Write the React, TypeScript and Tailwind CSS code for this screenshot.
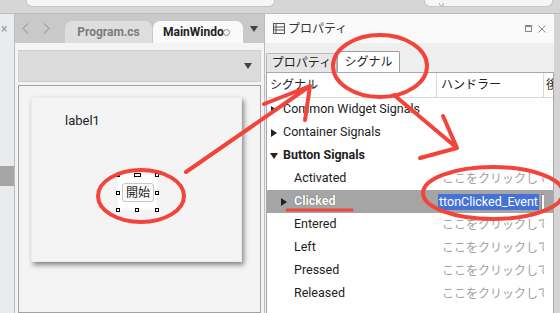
import React from 'react';

const ui = "font-['Roboto','Noto_Sans_CJK_JP',sans-serif]";

function TriRight({ className = '' }: { className?: string }) {
    return (
        <svg width="6" height="8" viewBox="0 0 6 8" className={className}>
            <path d="M0 0L6 4L0 8Z" fill="currentColor" />
        </svg>
    );
}

function TriDown({ className = '' }: { className?: string }) {
    return (
        <svg width="8" height="6" viewBox="0 0 8 6" className={className}>
            <path d="M0 0L8 0L4 6Z" fill="currentColor" />
        </svg>
    );
}

type Row = {
    label: string;
    level: 0 | 1;
    expander?: 'right' | 'down';
    bold?: boolean;
    selected?: boolean;
    handler?: string;
};

const placeholder = 'ここをクリックしてハンドラーを追加';

const rows: Row[] = [
    { label: 'Common Widget Signals', level: 0, expander: 'right' },
    { label: 'Container Signals', level: 0, expander: 'right' },
    { label: 'Button Signals', level: 0, expander: 'down', bold: true },
    { label: 'Activated', level: 1, handler: placeholder },
    { label: 'Clicked', level: 1, expander: 'right', selected: true },
    { label: 'Entered', level: 1, handler: placeholder },
    { label: 'Left', level: 1, handler: placeholder },
    { label: 'Pressed', level: 1, handler: placeholder },
    { label: 'Released', level: 1, handler: placeholder },
];

function SignalRow({ row }: { row: Row }) {
    return (
        <div
            className={`flex h-[23px] items-center ${row.selected ? 'bg-[#a5a5a5]' : ''}`}
        >
            <div className="flex w-[170px] shrink-0 items-center">
                {row.level === 0 ? (
                    <div className="flex items-center pl-[4px] text-[#222]">
                        {row.expander === 'down' ? (
                            <TriDown className="-ml-[1px]" />
                        ) : (
                            <TriRight />
                        )}
                        <span
                            className={`text-[12.5px] ${row.bold ? 'font-bold' : ''} ${row.expander === 'down' ? 'ml-[5px]' : 'ml-[6px]'}`}
                        >
                            {row.label}
                        </span>
                    </div>
                ) : (
                    <div className="flex items-center pl-[14px]">
                        {row.expander ? (
                            <TriRight className="text-[#222]" />
                        ) : (
                            <span className="w-[6px]" />
                        )}
                        <span
                            className={`ml-[7px] text-[12.5px] ${row.selected ? 'font-bold text-white [text-shadow:0_0_1px_rgba(0,0,0,0.6)]' : 'text-[#222]'}`}
                        >
                            {row.label}
                        </span>
                    </div>
                )}
            </div>
            <div className="flex w-[107px] shrink-0 items-center overflow-hidden whitespace-nowrap">
                {row.selected ? (
                    <>
                        <span className="ml-[1px] bg-[#4472d6] px-[1px] text-[12.5px] leading-[16px] text-white">
                            ttonClicked_Event
                        </span>
                        <span className="ml-[2px] h-[16px] w-[4px] shrink-0 border border-[#888] bg-white" />
                    </>
                ) : (
                    <span className="pl-[5px] text-[12px] text-[#a0a0a0]">
                        {row.handler}
                    </span>
                )}
            </div>
        </div>
    );
}

export default function App() {
    return (
        <div
            className={`relative flex h-[313px] w-[560px] flex-col overflow-hidden bg-[#d6d6d6] ${ui}`}
        >
            {/* window top strip */}
            <div className="flex h-[14px] shrink-0 items-start border-b border-[#bdbdbd] pl-[26px]">
                <div className="h-[7px] w-[249px] rounded-b-[6px] border-x border-b border-[#c6c6c6] bg-[#f6f6f6]" />
                <div className="ml-[149px] flex h-[7px] w-[129px] items-end rounded-b-[6px] border-x border-b border-[#c6c6c6] bg-[#f6f6f6] pl-[14px]">
                    <span className="h-[3px] w-[5px] rounded-b-full border-x border-b border-[#bbb]" />
                </div>
            </div>

            <div className="flex flex-1">
                {/* left dock strip */}
                <div className="flex w-[14px] shrink-0 flex-col bg-[#e9ebef]">
                    <div className="flex h-[29px] items-center pl-[1px] text-[12px] leading-none text-[#9a9a9a]">
                        ×
                    </div>
                    <div className="mt-[123px] h-[20px] bg-[#a6a6a6]" />
                </div>

                {/* editor */}
                <div className="flex w-[251px] shrink-0 flex-col border-x border-[#bcbcbc] bg-[#f4f4f4]">
                    <div className="flex h-[29px] shrink-0 items-end bg-[#c9c9c9]">
                        <div className="flex h-full items-center gap-[14px] pl-[7px] text-[#8a8a8a]">
                            <svg width="7" height="11" viewBox="0 0 7 11">
                                <path d="M6 0.5L1 5.5L6 10.5" fill="none" stroke="currentColor" strokeWidth="1" />
                            </svg>
                            <svg width="7" height="11" viewBox="0 0 7 11">
                                <path d="M1 0.5L6 5.5L1 10.5" fill="none" stroke="currentColor" strokeWidth="1" />
                            </svg>
                        </div>
                        <div className="ml-[15px] flex h-[22px] w-[87px] items-center justify-center rounded-t-[7px] bg-[#dedede] text-[12px] font-bold text-[#7b7b7b]">
                            Program.cs
                        </div>
                        <div className="ml-[1px] flex h-[22px] w-[90px] items-center rounded-t-[7px] bg-[#fafafa] pl-[10px] text-[12px] font-bold text-[#222]">
                            <span>MainWindo</span>
                            <span className="-ml-[1px] h-[7px] w-[7px] rounded-full border border-[#8a8a8a]" />
                        </div>
                        <div className="flex h-full flex-1 items-center justify-center text-[#444]">
                            <TriDown />
                        </div>
                    </div>

                    <div className="mx-[3px] mt-[7px] flex h-[32px] shrink-0 items-center justify-end border border-[#cfcfcf] bg-[#dbdbdb] pr-[8px] text-[#444]">
                        <TriDown />
                    </div>

                    <div className="mx-[3px] mt-[3px] flex-1 border border-[#a2a2a2] bg-[#f4f4f4] pl-[12px] pt-[11px]">
                        <div className="flex h-[165px] w-[211px] flex-col border border-[#ececec] bg-[#f4f4f4] shadow-[2px_3px_5px_rgba(0,0,0,0.45)]">
                            <div className="pl-[33px] pt-[15px] text-[13px] leading-[16px] text-[#222]">
                                label1
                            </div>
                            <div className="relative ml-[86px] mt-[46px] h-[35px] w-[39px] bg-white">
                                <div className="ml-[4px] mt-[8px] flex h-[19px] w-[32px] items-center justify-center rounded-[3px] border border-[#c8c8c8] bg-[#fbfbfb] text-[12px] text-[#222]">
                                    開始
                                </div>
                                <span className="absolute -left-[2px] -top-[2px] h-[4px] w-[4px] border border-black bg-white" />
                                <span className="absolute left-[16px] -top-[2px] h-[4px] w-[7px] border border-black bg-white" />
                                <span className="absolute -right-[2px] -top-[2px] h-[4px] w-[4px] border border-black bg-white" />
                                <span className="absolute -left-[2px] top-[16px] h-[4px] w-[4px] border border-black bg-white" />
                                <span className="absolute -right-[2px] top-[16px] h-[4px] w-[4px] border border-black bg-white" />
                                <span className="absolute -left-[2px] -bottom-[2px] h-[4px] w-[4px] border border-black bg-white" />
                                <span className="absolute left-[17px] -bottom-[2px] h-[4px] w-[4px] border border-black bg-white" />
                                <span className="absolute -right-[2px] -bottom-[2px] h-[4px] w-[4px] border border-black bg-white" />
                            </div>
                        </div>
                    </div>
                </div>

                {/* properties pad */}
                <div className="flex w-[289px] shrink-0 flex-col bg-[#efefef]">
                    <div className="flex h-[29px] shrink-0 items-center bg-[#fafafa] pl-[8px] pr-[8px] text-[#555]">
                        <svg width="12" height="11" viewBox="0 0 12 11">
                            <rect x="0.5" y="0.5" width="11" height="10" fill="none" stroke="currentColor" />
                            <path d="M0.5 4H11.5M0.5 7H11.5M3 0.5V10.5" stroke="currentColor" strokeWidth="1" />
                        </svg>
                        <span className="ml-[3px] text-[12px] text-[#333]">プロパティ</span>
                        <div className="ml-auto flex items-center gap-[6px] text-[#8a8a8a]">
                            <span className="h-[7px] w-[7px] border border-t-2 border-[#888]" />
                            <svg width="8" height="8" viewBox="0 0 8 8">
                                <path d="M0.5 0.5L7.5 7.5M7.5 0.5L0.5 7.5" stroke="currentColor" strokeWidth="1" />
                            </svg>
                        </div>
                    </div>

                    <div className="flex h-[29px] shrink-0 items-end pl-[1px]">
                        <div className="flex h-[19px] w-[71px] items-center justify-center rounded-t-[2px] border border-b-0 border-[#b8b8b8] bg-[#e6e6e6] text-[12px] text-[#222]">
                            プロパティ
                        </div>
                        <div className="flex h-[21px] w-[63px] items-center justify-center rounded-t-[2px] border border-b-0 border-[#9c9c9c] bg-white text-[12px] text-[#222]">
                            シグナル
                        </div>
                    </div>

                    <div className="ml-[1px] flex flex-1 flex-col border-x border-t border-[#a8a8a8] bg-white">
                        <div className="flex h-[25px] shrink-0 items-center border-b border-[#d8d8d8] text-[12px] text-[#222]">
                            <div className="flex h-full w-[170px] shrink-0 items-center border-r border-[#d8d8d8] pl-[3px]">
                                シグナル
                            </div>
                            <div className="flex h-full w-[107px] shrink-0 items-center border-r border-[#d8d8d8] pl-[4px]">
                                ハンドラー
                            </div>
                            <div className="flex h-full flex-1 items-center overflow-hidden whitespace-nowrap pl-[2px]">
                                後に実行
                            </div>
                        </div>
                        {rows.map((row) => (
                            <SignalRow key={row.label} row={row} />
                        ))}
                    </div>
                </div>

                <div className="w-[6px] shrink-0 bg-[#d4d4d4]" />
            </div>

            {/* red annotations */}
            <svg
                className="pointer-events-none absolute left-0 top-0"
                width="560"
                height="313"
                viewBox="0 0 560 313"
            >
                <g fill="none" stroke="#f3443c" strokeWidth="4" strokeLinecap="round">
                    <ellipse cx="380" cy="66" rx="47" ry="31" />
                    <ellipse cx="141" cy="196" rx="43" ry="26" />
                    <ellipse cx="493" cy="193" rx="70" ry="26" />
                    <path d="M186 172L310 86M310 86L264 104M310 86L305 120" />
                    <path d="M394 95L457 148M457 148L443 116M457 148L420 158" />
                    <path d="M287 210L352 210" strokeWidth="3" />
                </g>
            </svg>
        </div>
    );
}
